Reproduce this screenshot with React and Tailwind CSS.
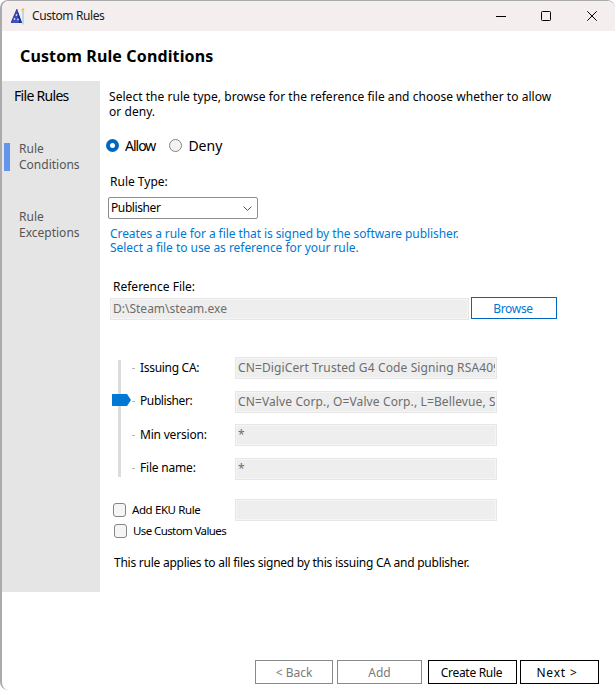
import React from 'react';

const body = "font-['Noto_Sans',sans-serif]";

const WizardIcon = () => (
    <svg width="15" height="17" viewBox="0 0 15 17" className="shrink-0">
        <path d="M6 1 L11 15 L0 15 Z" fill="#3d4fc4" />
        <path d="M6 1 L8 15 L11 15 Z" fill="#26307f" />
        <path d="M6 1 L0 15" stroke="#1c2468" strokeWidth="0.8" />
        <circle cx="5.5" cy="7" r="0.9" fill="#cfd8ff" />
        <circle cx="3.5" cy="11" r="0.9" fill="#cfd8ff" />
        <circle cx="7" cy="11.5" r="0.9" fill="#cfd8ff" />
        <path d="M12 3 L12 16.5" stroke="#9fd0f5" strokeWidth="1.4" />
        <path d="M12 0 L13.6 1.6 L12 3.4 L10 1.6 Z" fill="#e8c93a" />
    </svg>
);

const WindowControls = () => (
    <div className="flex items-center pr-[18px] text-black">
        <svg width="10" height="10" viewBox="0 0 10 10" className="mr-[35px]">
            <path d="M0 5.5 H10" stroke="currentColor" strokeWidth="1" />
        </svg>
        <svg width="10" height="10" viewBox="0 0 10 10" className="mr-[36px]">
            <rect x="0.5" y="0.5" width="9" height="9" rx="1" fill="none" stroke="currentColor" strokeWidth="1" />
        </svg>
        <svg width="10" height="10" viewBox="0 0 10 10">
            <path d="M0.3 0.3 L9.7 9.7 M9.7 0.3 L0.3 9.7" stroke="currentColor" strokeWidth="1" />
        </svg>
    </div>
);

const Radio = ({ checked, label, className = '' }) => (
    <div className="flex items-center gap-[6px] h-5">
        {checked ? (
            <span className="w-[13px] h-[13px] rounded-full bg-[#0067c0] flex items-center justify-center">
                <span className="w-[5px] h-[5px] rounded-full bg-white" />
            </span>
        ) : (
            <span className="w-[13px] h-[13px] rounded-full border border-[#858585] bg-[#f3f3f3]" />
        )}
        <span className={`text-[14px] text-black ${className}`}>{label}</span>
    </div>
);

const Field = ({ value, className = '' }) => (
    <div className={`h-[22px] border-2 border-[#f5f5f5] bg-[#eeeeee] outline outline-[#e6e6e6] -outline-offset-1 pl-px text-[12px] leading-[18px] text-[#6d6d6d] overflow-hidden whitespace-nowrap ${className}`}>
        {value}
    </div>
);

const LevelRow = ({ label, value, className = '' }) => (
    <div className="flex items-center h-[22px]">
        <span className="w-[3px] h-px bg-[#b5b5b5] ml-[24px]" />
        <span className={`w-[95px] ml-[5px] pb-px text-[12px] text-black ${className}`}>{label}</span>
        <Field value={value} className="w-[262px] tracking-[0.12px]" />
    </div>
);

const FooterButton = ({ label, disabled, className = '' }) => (
    <div className={`h-6 border flex items-center justify-center pt-px text-[12px] ${disabled ? 'border-[#8a8a8a] text-[#7a7a7a]' : 'border-black text-black'} ${className}`}>
        {label}
    </div>
);

export default function App() {
    return (
        <div className={`w-[615px] h-[690px] bg-white overflow-hidden ${body}`}>
            <div className="h-full flex flex-col rounded-t-lg rounded-b-lg border-t border-l-2 border-[#ababab] ">
                {/* Title bar */}
                <div className="h-[30px] shrink-0 bg-[#f5eeee] flex items-center justify-between rounded-t-lg">
                    <div className="flex items-center pl-[9px] gap-[6px]">
                        <WizardIcon />
                        <span className="text-[12px] tracking-[-0.4px] text-[#1a1a1a]">Custom Rules</span>
                    </div>
                    <WindowControls />
                </div>

                {/* Page header */}
                <div className="h-[50px] shrink-0 flex items-center pl-[18px]">
                    <h1 className="text-[16px] tracking-[0.13px] font-bold text-black">Custom Rule Conditions</h1>
                </div>

                <div className="flex">
                    {/* Steps */}
                    <div className="w-[98px] h-[511px] shrink-0 bg-[#e5e5e5]">
                        <div className="pl-3 pt-[6px] text-[14px] leading-[18px] tracking-[-0.7px] text-black">File Rules</div>
                        <div className="relative pl-[17px] mt-9 text-[12px] leading-4 text-[#555555]">
                            <span className="absolute left-[2px] top-[2px] w-[6px] h-[28px] bg-[#6495ed]" />
                            <div>Rule</div>
                            <div>Conditions</div>
                        </div>
                        <div className="pl-[17px] mt-9 text-[12px] leading-4 text-[#555555]">
                            <div>Rule</div>
                            <div>Exceptions</div>
                        </div>
                    </div>

                    {/* Page content */}
                    <div className="flex-1 pl-2 pt-2 text-[12px]">
                        <p className="pl-px w-[450px] leading-[15px] tracking-[0.04px] text-black">
                            Select the rule type, browse for the reference file and choose whether to allow or deny.
                        </p>

                        <div className="flex gap-[14px] mt-[16px] -ml-[2px]">
                            <Radio checked label="Allow" className="tracking-[-1px]" />
                            <Radio label="Deny" />
                        </div>

                        <div className="pl-[2px] mt-[19px] h-4 leading-4 text-black">Rule Type:</div>
                        <div className="mt-[7px] w-[150px] h-[22px] border border-[#8d8d8d] rounded-[2px] flex items-center justify-between pl-[2px] pr-[5px] text-black">
                            <span className="tracking-[-0.4px]">Publisher</span>
                            <svg width="9" height="5" viewBox="0 0 9 5">
                                <path d="M0.5 0.5 L4.5 4.5 L8.5 0.5" fill="none" stroke="#555" strokeWidth="1" />
                            </svg>
                        </div>

                        <p className="pl-[2px] mt-2 leading-[14px] tracking-[-0.08px] text-[#0078d4]">
                            Creates a rule for a file that is signed by the software publisher.<br />
                            <span className="tracking-[-0.04px]">Select a file to use as reference for your rule.</span>
                        </p>

                        <div className="pl-[5px] mt-6 h-4 leading-4 text-black">Reference File:</div>
                        <div className="flex items-start mt-[2px] ml-[2px]">
                            <Field value="D:\Steam\steam.exe" className="w-[359px] mt-px" />
                            <div className="ml-[2px] w-[86px] h-[22px] border border-[#0067c0] flex items-center justify-center pt-[2px] pr-[2px] tracking-[-0.3px] text-[#0078d4]">Browse</div>
                        </div>

                        {/* Level slider */}
                        <div className="relative mt-[37px] flex flex-col gap-[11.5px]">
                            <span className="absolute left-[10px] top-[3px] bottom-[3px] w-[3px] bg-[#dcdcdc]" />
                            <span className="absolute left-[4px] top-[37px] w-[15px] h-3 bg-[#0078d4]" />
                            <span className="absolute left-[19px] top-[37px] w-0 h-0 border-y-[6px] border-y-transparent border-l-[4px] border-l-[#0078d4]" />
                            <LevelRow label="Issuing CA:" className="tracking-[-0.3px]" value="CN=DigiCert Trusted G4 Code Signing RSA4096 SHA384 2021 CA1" />
                            <LevelRow label="Publisher:" className="tracking-[-0.4px]" value="CN=Valve Corp., O=Valve Corp., L=Bellevue, S=Washington, C=US" />
                            <LevelRow label="Min version:" className="tracking-[-0.2px]" value="*" />
                            <LevelRow label="File name:" className="tracking-[-0.2px]" value="*" />
                        </div>

                        <div className="flex items-center mt-[19px] h-[22px]">
                            <span className="ml-[5px] w-[13px] h-[14px] rounded-[3px] border border-[#858585] bg-[#f5f5f5]" />
                            <span className="ml-[6px] w-[103px] text-[11.5px] tracking-[-0.4px] text-black">Add EKU Rule</span>
                            <Field value="" className="w-[262px]" />
                        </div>
                        <div className="flex items-center mt-[3px] h-[14px]">
                            <span className="ml-[6px] w-[13px] h-[14px] rounded-[3px] border border-[#858585] bg-[#f5f5f5]" />
                            <span className="ml-[6px] text-[11.5px] tracking-[-0.6px] text-black">Use Custom Values</span>
                        </div>

                        <p className="pl-[6px] mt-[17px] h-4 leading-4 tracking-[-0.25px] text-black">This rule applies to all files signed by this issuing CA and publisher.</p>
                    </div>
                </div>

                {/* Footer */}
                <div className="mt-auto pb-[6px] pr-[16px] flex justify-end">
                    <FooterButton label="< Back" disabled className="w-[78px]" />
                    <FooterButton label="Add" disabled className="w-[85px] ml-[4px]" />
                    <FooterButton label="Create Rule" className="w-[89px] ml-[6px] pr-[2px] tracking-[-0.3px]" />
                    <FooterButton label="Next >" className="w-[79px] ml-[3px] pr-[5px] tracking-[0.8px]" />
                </div>
            </div>
        </div>
    );
}
